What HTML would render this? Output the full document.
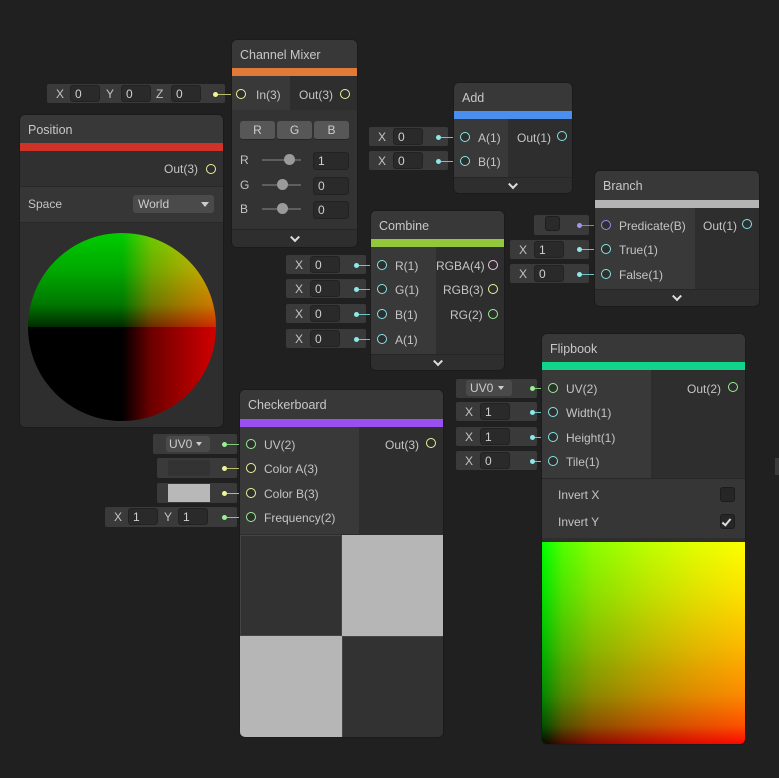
<!DOCTYPE html>
<html><head><meta charset="utf-8"><style>
*{margin:0;padding:0;box-sizing:border-box}
body{width:779px;height:778px;background:#202020;position:relative;overflow:hidden;font-family:"Liberation Sans",sans-serif;font-size:12px;color:#c4c4c4}
.a{position:absolute}
.n{position:absolute;border-radius:6px;overflow:hidden;background:#2e2e2e;border:1px solid #1b1b1b}
.hd{position:absolute;left:0;right:0;top:0;height:28px;background:#383838}
.hd span{position:absolute;left:8px;top:8px;font-size:12.5px;color:#c8c8c8}
.bar{position:absolute;left:0;right:0;top:28px;height:8px}
.in{position:absolute;background:#393939}
.ft{position:absolute;left:0;right:0;bottom:0;background:#2e2e2e;border-top:1px solid #262626}
.ch{position:absolute;left:50%;top:50%;width:7px;height:7px;border-right:2px solid #ddd;border-bottom:2px solid #ddd;transform:translate(-50%,-75%) rotate(45deg)}
.p{position:absolute;width:10px;height:10px;border-radius:50%;border:1.5px solid;background:#2e2e2e}
.d{position:absolute;width:5px;height:5px;border-radius:50%}
.w{position:absolute;height:1px}
.t{position:absolute;line-height:16px;white-space:nowrap}
.f{position:absolute;background:#3a3a3a;border-radius:2px}
.b{position:absolute;background:#2a2a2a;border:1px solid #222;border-radius:3px;line-height:17px;padding-left:4px;color:#d0d0d0}
.btn{position:absolute;background:#575757;border-radius:3px;text-align:center;line-height:18px;color:#ccc;border-bottom:1px solid #262626}
.trk{position:absolute;height:2px;background:#5e5e5e}
.kn{position:absolute;width:11px;height:11px;border-radius:50%;background:#9a9a9a}
.dd{position:absolute;background:#4a4a4a;border-radius:3px;line-height:18px;padding-left:5px;color:#ccc}
.tri{position:absolute;width:0;height:0;border-left:4px solid transparent;border-right:4px solid transparent;border-top:5px solid #ccc}
.cb{position:absolute;width:15px;height:15px;background:#262626;border:1px solid #1c1c1c;border-radius:3px}
</style></head><body>

<div class="f" style="left:47px;top:84px;width:178px;height:19px"></div>
<div class="t" style="left:56px;top:86px">X</div><div class="b" style="left:70px;top:85px;width:30px;height:17px">0</div>
<div class="t" style="left:106px;top:86px">Y</div><div class="b" style="left:121px;top:85px;width:30px;height:17px">0</div>
<div class="t" style="left:156px;top:86px">Z</div><div class="b" style="left:171px;top:85px;width:30px;height:17px">0</div>
<div class="w" style="left:216px;top:94px;width:22px;background:#b8bf6a"></div>
<div class="d" style="left:213px;top:92px;background:#f0f59a"></div>

<div class="n" style="left:231px;top:39px;width:127px;height:209px">
  <div class="hd"><span>Channel Mixer</span></div>
  <div class="bar" style="background:#e07a38"></div>
  <div class="in" style="left:0;top:36px;width:58px;height:34px"></div>
  <div class="a" style="left:0;top:70px;right:0;height:121px;background:#333"></div>
  <div class="ft" style="height:18px"><div class="ch"></div></div>
</div>
<div class="p" style="left:236px;top:89px;border-color:#eef39a"></div>
<div class="t" style="left:256px;top:87px">In(3)</div>
<div class="t" style="left:299px;top:87px">Out(3)</div>
<div class="p" style="left:340px;top:89px;border-color:#eef39a"></div>
<div class="btn" style="left:240px;top:121px;width:35px;height:19px">R</div>
<div class="btn" style="left:277px;top:121px;width:35px;height:19px">G</div>
<div class="btn" style="left:314px;top:121px;width:35px;height:19px">B</div>
<div class="t" style="left:240px;top:152px">R</div><div class="trk" style="left:262px;top:159px;width:39px"></div><div class="kn" style="left:284px;top:154px"></div><div class="b" style="left:313px;top:152px;width:36px;height:18px">1</div>
<div class="t" style="left:240px;top:177px">G</div><div class="trk" style="left:262px;top:184px;width:39px"></div><div class="kn" style="left:277px;top:179px"></div><div class="b" style="left:313px;top:177px;width:36px;height:18px">0</div>
<div class="t" style="left:240px;top:201px">B</div><div class="trk" style="left:262px;top:208px;width:39px"></div><div class="kn" style="left:277px;top:203px"></div><div class="b" style="left:313px;top:201px;width:36px;height:18px">0</div>

<div class="n" style="left:19px;top:114px;width:205px;height:314px">
  <div class="hd"><span>Position</span></div>
  <div class="bar" style="background:#cf3226"></div>
  <div class="a" style="left:0;top:36px;right:0;height:35px;background:#303030"></div>
  <div class="a" style="left:0;top:71px;right:0;height:37px;background:#363636;border-top:1px solid #282828;border-bottom:1px solid #282828"></div>
  <div class="a" style="left:8px;top:118px;width:188px;height:188px;border-radius:50%;overflow:hidden;background:linear-gradient(to right,#000 50%,#000 50%,#6a0000 65%,#9a0000 80%,#d00000 100%)">
    <div class="a" style="left:0;top:0;width:100%;height:100%;background:linear-gradient(to bottom,#00cc00 0%,#00a800 20%,#007800 38%,#002a00 50%,#000 50%);mix-blend-mode:screen"></div>
  </div>
</div>
<div class="t" style="left:164px;top:161px">Out(3)</div>
<div class="p" style="left:206px;top:164px;border-color:#eef39a"></div>
<div class="t" style="left:28px;top:196px">Space</div>
<div class="dd" style="left:133px;top:195px;width:81px;height:18px">World</div>
<div class="tri" style="left:201px;top:202px"></div>

<div class="f" style="left:369px;top:127px;width:79px;height:19px"></div>
<div class="t" style="left:378px;top:129px">X</div><div class="b" style="left:393px;top:128px;width:30px;height:17px">0</div>
<div class="w" style="left:439px;top:137px;width:22px;background:#6fc3c6"></div><div class="d" style="left:436px;top:135px;background:#8ee8ea"></div>
<div class="f" style="left:369px;top:151px;width:79px;height:19px"></div>
<div class="t" style="left:378px;top:153px">X</div><div class="b" style="left:393px;top:152px;width:30px;height:17px">0</div>
<div class="w" style="left:439px;top:161px;width:22px;background:#6fc3c6"></div><div class="d" style="left:436px;top:159px;background:#8ee8ea"></div>
<div class="n" style="left:453px;top:82px;width:120px;height:112px">
  <div class="hd"><span>Add</span></div>
  <div class="bar" style="background:#4a8ff0"></div>
  <div class="in" style="left:0;top:36px;width:54px;height:60px"></div>
  <div class="ft" style="height:16px"><div class="ch"></div></div>
</div>
<div class="p" style="left:460px;top:132px;border-color:#84e4e7"></div><div class="t" style="left:478px;top:130px">A(1)</div>
<div class="p" style="left:460px;top:156px;border-color:#84e4e7"></div><div class="t" style="left:478px;top:154px">B(1)</div>
<div class="t" style="left:517px;top:130px">Out(1)</div><div class="p" style="left:557px;top:131px;border-color:#84e4e7"></div>

<div class="f" style="left:534px;top:215px;width:55px;height:20px"></div>
<div class="a" style="left:545px;top:216px;width:15px;height:15px;background:#2a2a2a;border:1px solid #1e1e1e;border-radius:3px"></div>
<div class="w" style="left:580px;top:225px;width:22px;background:#8a7ad0"></div><div class="d" style="left:577px;top:223px;background:#a494f0"></div>
<div class="f" style="left:510px;top:240px;width:79px;height:19px"></div>
<div class="t" style="left:519px;top:242px">X</div><div class="b" style="left:534px;top:241px;width:30px;height:17px">1</div>
<div class="w" style="left:580px;top:249px;width:22px;background:#6fc3c6"></div><div class="d" style="left:577px;top:247px;background:#8ee8ea"></div>
<div class="f" style="left:510px;top:264px;width:79px;height:19px"></div>
<div class="t" style="left:519px;top:266px">X</div><div class="b" style="left:534px;top:265px;width:30px;height:17px">0</div>
<div class="w" style="left:580px;top:274px;width:22px;background:#6fc3c6"></div><div class="d" style="left:577px;top:272px;background:#8ee8ea"></div>
<div class="n" style="left:594px;top:170px;width:166px;height:137px">
  <div class="hd" style="height:29px"><span>Branch</span></div>
  <div class="bar" style="top:29px;background:#b4b4b4"></div>
  <div class="in" style="left:0;top:37px;width:100px;height:83px"></div>
  <div class="ft" style="height:17px"><div class="ch"></div></div>
</div>
<div class="p" style="left:601px;top:220px;border-color:#9a8cf0"></div><div class="t" style="left:619px;top:218px">Predicate(B)</div>
<div class="p" style="left:601px;top:244px;border-color:#84e4e7"></div><div class="t" style="left:619px;top:242px">True(1)</div>
<div class="p" style="left:601px;top:269px;border-color:#84e4e7"></div><div class="t" style="left:619px;top:267px">False(1)</div>
<div class="t" style="left:703px;top:218px">Out(1)</div><div class="p" style="left:742px;top:219px;border-color:#84e4e7"></div>

<div class="f" style="left:286px;top:255px;width:80px;height:19px"></div><div class="t" style="left:295px;top:257px">X</div><div class="b" style="left:310px;top:256px;width:30px;height:17px">0</div>
<div class="w" style="left:357px;top:265px;width:22px;background:#6fc3c6"></div><div class="d" style="left:354px;top:263px;background:#8ee8ea"></div>
<div class="f" style="left:286px;top:279px;width:80px;height:19px"></div><div class="t" style="left:295px;top:281px">X</div><div class="b" style="left:310px;top:280px;width:30px;height:17px">0</div>
<div class="w" style="left:357px;top:289px;width:22px;background:#6fc3c6"></div><div class="d" style="left:354px;top:287px;background:#8ee8ea"></div>
<div class="f" style="left:286px;top:304px;width:80px;height:19px"></div><div class="t" style="left:295px;top:306px">X</div><div class="b" style="left:310px;top:305px;width:30px;height:17px">0</div>
<div class="w" style="left:357px;top:314px;width:22px;background:#6fc3c6"></div><div class="d" style="left:354px;top:312px;background:#8ee8ea"></div>
<div class="f" style="left:286px;top:329px;width:80px;height:19px"></div><div class="t" style="left:295px;top:331px">X</div><div class="b" style="left:310px;top:330px;width:30px;height:17px">0</div>
<div class="w" style="left:357px;top:339px;width:22px;background:#6fc3c6"></div><div class="d" style="left:354px;top:337px;background:#8ee8ea"></div>
<div class="n" style="left:370px;top:210px;width:135px;height:161px">
  <div class="hd"><span>Combine</span></div>
  <div class="bar" style="background:#94c83c"></div>
  <div class="in" style="left:0;top:36px;width:65px;height:109px"></div>
  <div class="ft" style="height:16px"><div class="ch"></div></div>
</div>
<div class="p" style="left:377px;top:260px;border-color:#84e4e7"></div><div class="t" style="left:395px;top:258px">R(1)</div>
<div class="p" style="left:377px;top:284px;border-color:#84e4e7"></div><div class="t" style="left:395px;top:282px">G(1)</div>
<div class="p" style="left:377px;top:309px;border-color:#84e4e7"></div><div class="t" style="left:395px;top:307px">B(1)</div>
<div class="p" style="left:377px;top:334px;border-color:#84e4e7"></div><div class="t" style="left:395px;top:332px">A(1)</div>
<div class="t" style="left:436px;top:258px">RGBA(4)</div><div class="p" style="left:488px;top:260px;border-color:#f3c2ef"></div>
<div class="t" style="left:443px;top:282px">RGB(3)</div><div class="p" style="left:488px;top:284px;border-color:#eef39a"></div>
<div class="t" style="left:450px;top:307px">RG(2)</div><div class="p" style="left:488px;top:309px;border-color:#9aef92"></div>

<div class="f" style="left:456px;top:379px;width:81px;height:19px"></div>
<div class="dd" style="left:466px;top:380px;width:46px;height:16px;line-height:16px;padding-left:4px">UV0</div><div class="tri" style="left:498px;top:386px;border-width:4px 3px 0 3px;border-top-color:#ccc"></div>
<div class="w" style="left:533px;top:388px;width:18px;background:#84c97e"></div><div class="d" style="left:530px;top:386px;background:#9aef92"></div>
<div class="f" style="left:456px;top:402px;width:81px;height:19px"></div><div class="t" style="left:465px;top:404px">X</div><div class="b" style="left:480px;top:403px;width:30px;height:17px">1</div>
<div class="w" style="left:533px;top:412px;width:18px;background:#6fc3c6"></div><div class="d" style="left:530px;top:410px;background:#8ee8ea"></div>
<div class="f" style="left:456px;top:427px;width:81px;height:19px"></div><div class="t" style="left:465px;top:429px">X</div><div class="b" style="left:480px;top:428px;width:30px;height:17px">1</div>
<div class="w" style="left:533px;top:437px;width:18px;background:#6fc3c6"></div><div class="d" style="left:530px;top:435px;background:#8ee8ea"></div>
<div class="f" style="left:456px;top:451px;width:81px;height:19px"></div><div class="t" style="left:465px;top:453px">X</div><div class="b" style="left:480px;top:452px;width:30px;height:17px">0</div>
<div class="w" style="left:533px;top:461px;width:18px;background:#6fc3c6"></div><div class="d" style="left:530px;top:459px;background:#8ee8ea"></div>
<div class="n" style="left:541px;top:333px;width:205px;height:412px">
  <div class="hd"><span>Flipbook</span></div>
  <div class="bar" style="background:#10d38c"></div>
  <div class="in" style="left:0;top:36px;width:109px;height:108px"></div>
  <div class="a" style="left:0;top:144px;right:0;height:60px;background:#363636;border-top:1px solid #282828"></div>
  <div class="a" style="left:0;top:208px;width:205px;height:204px;background:linear-gradient(to right,#000 0%,#500000 10%,#890000 25%,#ba0000 50%,#e10000 75%,#ff0000 100%)">
    <div class="a" style="left:0;top:0;width:100%;height:100%;background:linear-gradient(to bottom,#00ff00 0%,#00e100 25%,#00ba00 50%,#008900 75%,#005000 90%,#000 100%);mix-blend-mode:screen"></div>
  </div>
</div>
<div class="p" style="left:548px;top:383px;border-color:#9aef92"></div><div class="t" style="left:566px;top:381px">UV(2)</div>
<div class="p" style="left:548px;top:407px;border-color:#84e4e7"></div><div class="t" style="left:566px;top:405px">Width(1)</div>
<div class="p" style="left:548px;top:432px;border-color:#84e4e7"></div><div class="t" style="left:566px;top:430px">Height(1)</div>
<div class="p" style="left:548px;top:456px;border-color:#84e4e7"></div><div class="t" style="left:566px;top:454px">Tile(1)</div>
<div class="t" style="left:687px;top:381px">Out(2)</div><div class="p" style="left:728px;top:382px;border-color:#9aef92"></div>
<div class="t" style="left:558px;top:487px">Invert X</div><div class="cb" style="left:720px;top:487px"></div>
<div class="t" style="left:558px;top:514px">Invert Y</div><div class="cb" style="left:720px;top:514px"></div>
<div class="a" style="left:724px;top:517px;width:5px;height:9px;border-right:2px solid #ddd;border-bottom:2px solid #ddd;transform:rotate(40deg)"></div>

<div class="f" style="left:153px;top:434px;width:84px;height:20px"></div>
<div class="dd" style="left:166px;top:436px;width:44px;height:16px;line-height:16px;padding-left:3px">UV0</div><div class="tri" style="left:196px;top:442px;border-width:4px 3px 0 3px;border-top-color:#ccc"></div>
<div class="w" style="left:225px;top:444px;width:22px;background:#84c97e"></div><div class="d" style="left:222px;top:442px;background:#9aef92"></div>
<div class="f" style="left:157px;top:458px;width:80px;height:20px"></div><div class="a" style="left:168px;top:460px;width:42px;height:16px;background:#333"></div>
<div class="w" style="left:225px;top:468px;width:22px;background:#b8bf6a"></div><div class="d" style="left:222px;top:466px;background:#f0f59a"></div>
<div class="f" style="left:157px;top:483px;width:80px;height:20px"></div><div class="a" style="left:168px;top:484px;width:42px;height:18px;background:#b8b8b8"></div>
<div class="w" style="left:225px;top:493px;width:22px;background:#b8bf6a"></div><div class="d" style="left:222px;top:491px;background:#f0f59a"></div>
<div class="f" style="left:105px;top:507px;width:132px;height:20px"></div>
<div class="t" style="left:114px;top:509px">X</div><div class="b" style="left:128px;top:508px;width:30px;height:17px">1</div>
<div class="t" style="left:164px;top:509px">Y</div><div class="b" style="left:178px;top:508px;width:30px;height:17px">1</div>
<div class="w" style="left:225px;top:517px;width:22px;background:#84c97e"></div><div class="d" style="left:222px;top:515px;background:#9aef92"></div>
<div class="n" style="left:239px;top:389px;width:205px;height:349px">
  <div class="hd" style="height:29px"><span>Checkerboard</span></div>
  <div class="bar" style="top:29px;background:#9a4ff0"></div>
  <div class="in" style="left:0;top:37px;width:119px;height:107px"></div>
  <div class="a" style="left:0;top:145px;width:102px;height:101px;background:#323232;border:1px solid #444"></div>
  <div class="a" style="left:102px;top:145px;width:102px;height:101px;background:#b6b6b6"></div>
  <div class="a" style="left:0;top:246px;width:102px;height:102px;background:#b6b6b6"></div>
  <div class="a" style="left:102px;top:246px;width:102px;height:102px;background:#323232;border:1px solid #444"></div>
</div>
<div class="p" style="left:246px;top:439px;border-color:#9aef92"></div><div class="t" style="left:264px;top:437px">UV(2)</div>
<div class="p" style="left:246px;top:463px;border-color:#eef39a"></div><div class="t" style="left:264px;top:461px">Color A(3)</div>
<div class="p" style="left:246px;top:488px;border-color:#eef39a"></div><div class="t" style="left:264px;top:486px">Color B(3)</div>
<div class="p" style="left:246px;top:512px;border-color:#9aef92"></div><div class="t" style="left:264px;top:510px">Frequency(2)</div>
<div class="t" style="left:385px;top:437px">Out(3)</div><div class="p" style="left:426px;top:438px;border-color:#eef39a"></div>

<div class="a" style="left:775px;top:458px;width:4px;height:17px;background:#3a3a3a"></div>
</body></html>
